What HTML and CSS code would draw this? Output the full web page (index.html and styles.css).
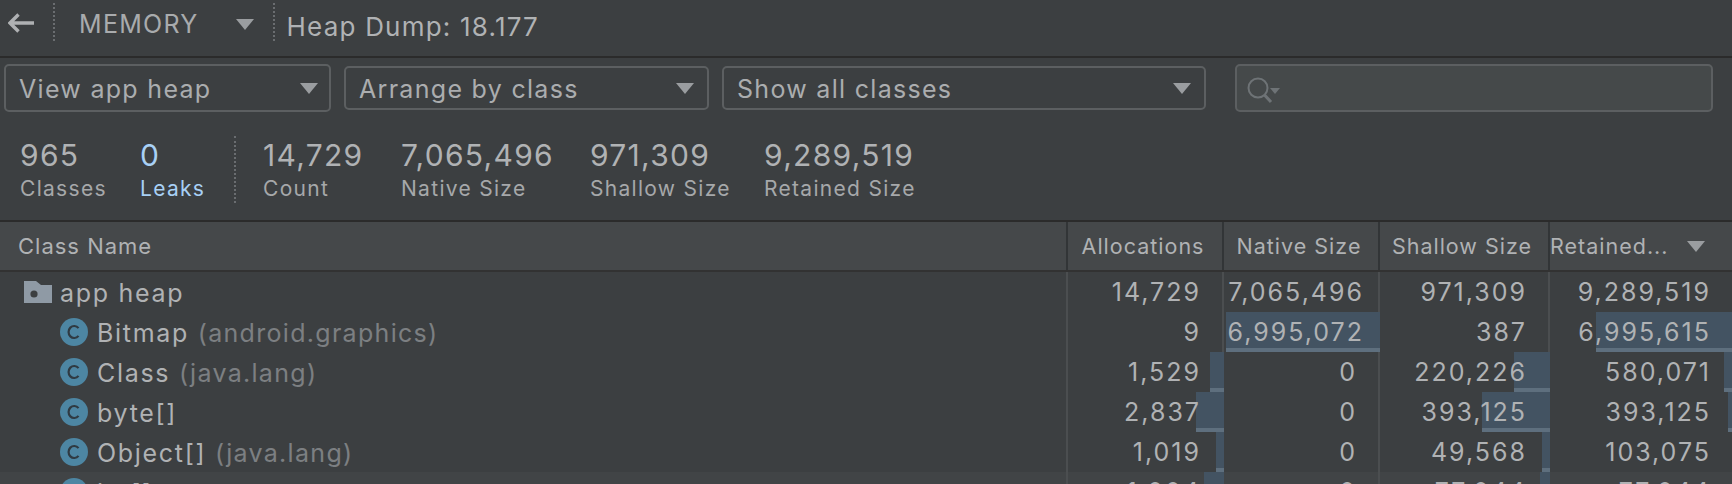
FILE: index.html
```html
<!DOCTYPE html>
<html lang="en">
<head>
  <meta charset="UTF-8" />
  <title>Memory - Heap Dump</title>
  <link rel="stylesheet" href="styles.css">
</head>
<body>
  <div class="topbar">
    <svg class="back" width="26" height="20" viewBox="0 0 26 20"><path d="M1.5 10H26M10.5 1.5L2 10l8.5 8.5" fill="none" stroke="#afb1b3" stroke-width="3.4"/></svg>
    <div class="dots first"></div>
    <span class="memory">MEMORY</span>
    <span class="tri"></span>
    <div class="dots second"></div>
    <span class="dump">Heap Dump: 18.177</span>
  </div>

  <div class="toolbar">
    <div class="combo focus c1"><span>View app heap</span><i class="tri"></i></div>
    <div class="combo c2"><span>Arrange by class</span><i class="tri"></i></div>
    <div class="combo c3"><span>Show all classes</span><i class="tri"></i></div>
    <div class="search">
      <svg width="34" height="28" viewBox="0 0 34 28"><circle cx="11" cy="11" r="9.5" fill="none" stroke="#6e7376" stroke-width="2"/><path d="M17.5 18L24 25" stroke="#6e7376" stroke-width="3"/><path d="M23 11h10l-5 6z" fill="#6e7376"/></svg>
    </div>
  </div>

  <div class="stats">
    <div class="stat s-classes"><b>965</b><span>Classes</span></div>
    <div class="stat s-leaks link"><b>0</b><span>Leaks</span></div>
    <div class="dots third"></div>
    <div class="stat s-count"><b>14,729</b><span>Count</span></div>
    <div class="stat s-native"><b>7,065,496</b><span>Native Size</span></div>
    <div class="stat s-shallow"><b>971,309</b><span>Shallow Size</span></div>
    <div class="stat"><b>9,289,519</b><span>Retained Size</span></div>
  </div>

  <div class="table">
    <div class="row head">
      <div class="cell name">Class Name</div>
      <div class="cell num">Allocations</div>
      <div class="cell num">Native Size</div>
      <div class="cell num">Shallow Size</div>
      <div class="cell num sorted">Retained...<i class="tri"></i></div>
    </div>

    <div class="row">
      <div class="cell name root">
        <svg width="28" height="22" viewBox="0 0 28 22"><path d="M0 0h12l5 4h11v18H0z" fill="#8f9aa5"/><circle cx="10" cy="13" r="3.6" fill="#3c3f41"/></svg>
        <span>app heap</span>
      </div>
      <div class="cell num">14,729</div>
      <div class="cell num tight">7,065,496</div>
      <div class="cell num">971,309</div>
      <div class="cell num">9,289,519</div>
    </div>

    <div class="row">
      <div class="cell name"><span class="cls"><svg width="14" height="16" viewBox="0 0 14 16"><path d="M11.5 4.2A5.6 6 0 1 0 11.5 11.8" fill="none" stroke="#2f3a42" stroke-width="2.2"/></svg></span><span>Bitmap <em>(android.graphics)</em></span></div>
      <div class="cell num">9</div>
      <div class="cell num tight"><i class="bar" style="width:154px"></i><span>6,995,072</span></div>
      <div class="cell num">387</div>
      <div class="cell num"><i class="bar" style="width:136px"></i><span>6,995,615</span></div>
    </div>

    <div class="row">
      <div class="cell name"><span class="cls"><svg width="14" height="16" viewBox="0 0 14 16"><path d="M11.5 4.2A5.6 6 0 1 0 11.5 11.8" fill="none" stroke="#2f3a42" stroke-width="2.2"/></svg></span><span>Class <em>(java.lang)</em></span></div>
      <div class="cell num"><i class="bar" style="width:14px"></i><span>1,529</span></div>
      <div class="cell num">0</div>
      <div class="cell num"><i class="bar" style="width:36px"></i><span>220,226</span></div>
      <div class="cell num"><i class="bar" style="width:8px"></i><span>580,071</span></div>
    </div>

    <div class="row">
      <div class="cell name"><span class="cls"><svg width="14" height="16" viewBox="0 0 14 16"><path d="M11.5 4.2A5.6 6 0 1 0 11.5 11.8" fill="none" stroke="#2f3a42" stroke-width="2.2"/></svg></span><span>byte[]</span></div>
      <div class="cell num"><i class="bar" style="width:28px"></i><span>2,837</span></div>
      <div class="cell num">0</div>
      <div class="cell num"><i class="bar" style="width:68px"></i><span>393,125</span></div>
      <div class="cell num"><i class="bar" style="width:4px"></i><span>393,125</span></div>
    </div>

    <div class="row">
      <div class="cell name"><span class="cls"><svg width="14" height="16" viewBox="0 0 14 16"><path d="M11.5 4.2A5.6 6 0 1 0 11.5 11.8" fill="none" stroke="#2f3a42" stroke-width="2.2"/></svg></span><span>Object[] <em>(java.lang)</em></span></div>
      <div class="cell num"><i class="bar" style="width:8px"></i><span>1,019</span></div>
      <div class="cell num">0</div>
      <div class="cell num"><i class="bar" style="width:8px"></i><span>49,568</span></div>
      <div class="cell num">103,075</div>
    </div>

    <div class="row alt">
      <div class="cell name"><span class="cls"><svg width="14" height="16" viewBox="0 0 14 16"><path d="M11.5 4.2A5.6 6 0 1 0 11.5 11.8" fill="none" stroke="#2f3a42" stroke-width="2.2"/></svg></span><span>int[]</span></div>
      <div class="cell num"><i class="bar" style="width:20px"></i><span>1,004</span></div>
      <div class="cell num">0</div>
      <div class="cell num"><i class="bar" style="width:10px"></i><span>77,044</span></div>
      <div class="cell num">77,044</div>
    </div>
  </div>
</body>
</html>
```

FILE: styles.css
```css
* {
  box-sizing: border-box;
  font-family: Inter, "Liberation Sans", sans-serif;
}
html, body {
  margin: 0;
  padding: 0;
  height: 484px;
  overflow: hidden;
}
body {
  background-color: #3c3f41;
  color: #b0b2b4;
}
.tri {
  display: inline-block;
  width: 0;
  height: 0;
  border-left: 9px solid transparent;
  border-right: 9px solid transparent;
  border-top: 11px solid #9a9da0;
}
.dots { border-left: 2px dotted #6a6d70; }

.topbar {
  height: 58px;
  border-bottom: 2px solid #2b2b2b;
  display: flex;
  align-items: center;
  padding: 0 0 0 8px;
}
.topbar .back { margin-right: 19px; margin-top: -10px; }
.topbar .dots { height: 38px; margin-top: -12px; }
.memory { font-size: 25px; letter-spacing: 1.3px; margin-left: 24px; margin-top: -8px; color: #a9abad; }
.topbar .tri { margin-left: 37px; margin-top: -8px; margin-right: 19px; }
.dump { font-size: 26px; letter-spacing: 1.2px; margin-left: 12px; margin-top: -3px; }

.toolbar {
  height: 60px;
  display: flex;
  align-items: center;
  padding-left: 4px;
}
.combo {
  height: 44px;
  margin-right: 13px;
  border: 2px solid #5c5f61;
  border-radius: 5px;
  display: flex;
  align-items: center;
  justify-content: space-between;
  padding: 0 13px;
  font-size: 25px;
  letter-spacing: 1.3px;
  color: #abadaf;
}
.combo span { margin-top: 2px; }
.combo.focus { height: 48px; }
.c1 { width: 327px; padding-right: 11px; }
.c2 { width: 365px; }
.c3 { width: 484px; }
.search {
  width: 478px;
  height: 48px;
  margin-left: 16px;
  background-color: #45494a;
  border: 2px solid #5c5f61;
  border-radius: 5px;
  padding: 11px 0 0 10px;
}

.stats {
  height: 104px;
  display: flex;
  align-items: flex-start;
  padding: 19px 0 0 20px;
  border-bottom: 2px solid #2b2b2b;
}
.stat { display: flex; flex-direction: column; }
.stat b { font-weight: 400; font-size: 30px; line-height: 36px; letter-spacing: 1.3px; }
.stat span { font-size: 21px; line-height: 31px; letter-spacing: 1.3px; color: #a6a8aa; }
.link b, .link span { color: #a8d0f5; }
.s-classes { width: 120px; }
.s-leaks { width: 94px; }
.third { height: 67px; margin-top: -1px; margin-right: 27px; }
.s-count { width: 138px; }
.s-native { width: 189px; }
.s-shallow { width: 174px; }

.row {
  display: grid;
  grid-template-columns: 1068px 156px 156px 170px 182px;
  height: 40px;
}
.row.head {
  height: 50px;
  background-color: #45484a;
  border-bottom: 2px solid #323232;
}
.cell {
  display: flex;
  align-items: center;
  font-size: 25px;
  letter-spacing: 2px;
  position: relative;
  border-right: 2px solid #4b4e50;
}
.cell:last-child { border-right: none; }
.head .cell { font-size: 21.5px; letter-spacing: 1px; border-right: 2px solid #323537; }
.head .cell:last-child { border-right: none; }
.head .name { padding-left: 18px; font-size: 22px; }
.head .num { padding: 0 4px 0 0; justify-content: center; }
.head .sorted { justify-content: flex-start; padding: 0; }
.head .sorted .tri { margin-left: 19px; }

.name { padding-left: 60px; gap: 9px; letter-spacing: 1.7px; }
.root { padding-left: 24px; gap: 8px; }
.name em { font-style: normal; color: #7c7f82; letter-spacing: 1.3px; }
.cell.name span { margin-top: 2px; }
.cell.name .cls { margin-top: 0; }

.cls {
  width: 28px;
  height: 28px;
  border-radius: 50%;
  background-color: #4d86a3;
  display: flex;
  align-items: center;
  justify-content: center;
}

.num { justify-content: flex-end; padding-right: 21px; }
.num.tight { padding-right: 14px; }
.num span { position: relative; }

.bar {
  position: absolute;
  top: 0;
  right: -2px;
  bottom: 0;
  background-color: #435362;
  border-bottom: 4px solid #5e6f7e;
}
.cell:last-child .bar { right: 0; }

.alt { background-color: #414446; }
```
